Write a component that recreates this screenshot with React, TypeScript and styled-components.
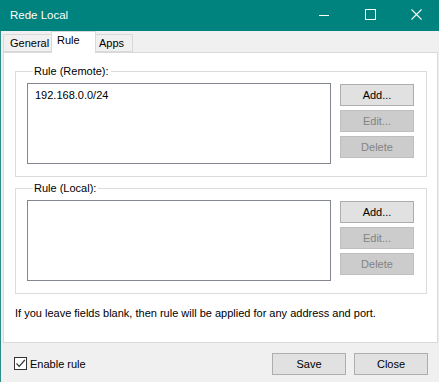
import { FC } from "react";
import styled, { createGlobalStyle } from "styled-components";

const font = `"Segoe UI", "Liberation Sans", Arial, sans-serif`;

const GlobalStyle = createGlobalStyle`
  html, body {
    margin: 0;
    padding: 0;
    background: #f0f0f0;
  }
  * {
    box-sizing: border-box;
  }
`;

type Rule = { title: string; entries: string[] };

const rules: Rule[] = [
  { title: "Rule (Remote):", entries: ["192.168.0.0/24"] },
  { title: "Rule (Local):", entries: [] },
];

const tabs = [
  { label: "General", width: 49, indent: 6 },
  { label: "Rule", width: 45, indent: 5, active: true },
  { label: "Apps", width: 38, indent: 3 },
];

const App: FC = () => (
  <>
    <GlobalStyle />
    <Window>
      <TitleBar>
        <Title>Rede Local</Title>
        <Controls>
          <ControlButton>
            <svg width="10" height="10" viewBox="0 0 10 10">
              <line x1="0" y1="5.5" x2="10" y2="5.5" stroke="#fff" strokeWidth="1" />
            </svg>
          </ControlButton>
          <ControlButton>
            <svg width="11" height="11" viewBox="0 0 11 11">
              <rect x="0.5" y="0.5" width="10" height="10" fill="none" stroke="#fff" strokeWidth="1" />
            </svg>
          </ControlButton>
          <ControlButton>
            <svg width="11" height="11" viewBox="0 0 11 11">
              <path d="M0.5 0.5 L10.5 10.5 M10.5 0.5 L0.5 10.5" stroke="#fff" strokeWidth="1.1" />
            </svg>
          </ControlButton>
        </Controls>
      </TitleBar>

      <TabStrip>
        {tabs.map((tab) => (
          <Tab key={tab.label} active={tab.active} $width={tab.width} $indent={tab.indent}>
            {tab.label}
          </Tab>
        ))}
      </TabStrip>

      <Panel>
        {rules.map((rule) => (
          <Group key={rule.title}>
            <Legend>{rule.title}</Legend>
            <GroupBody>
              <ListBox>
                {rule.entries.map((entry) => (
                  <ListItem key={entry}>{entry}</ListItem>
                ))}
              </ListBox>
              <ButtonColumn>
                <Button>Add...</Button>
                <Button disabled>Edit...</Button>
                <Button disabled>Delete</Button>
              </ButtonColumn>
            </GroupBody>
          </Group>
        ))}
        <Hint>
          If you leave fields blank, then rule will be applied for any address and port.
        </Hint>
      </Panel>

      <Footer>
        <CheckLabel>
          <CheckBox>
            <svg width="11" height="11" viewBox="0 0 11 11">
              <path d="M1.5 5.5 L4.2 8.3 L9.8 2" fill="none" stroke="#333" strokeWidth="1.2" />
            </svg>
          </CheckBox>
          Enable rule
        </CheckLabel>
        <FooterButtons>
          <Button>Save</Button>
          <Button>Close</Button>
        </FooterButtons>
      </Footer>
    </Window>
  </>
);

export default App;

const Window = styled.div`
  width: 439px;
  height: 382px;
  display: flex;
  flex-direction: column;
  background: #f0f0f0;
  border-left: 1px solid #2b8f88;
  font-family: ${font};
  font-size: 11px;
  color: #000;
`;

const TitleBar = styled.div`
  height: 31px;
  flex: none;
  display: flex;
  align-items: center;
  justify-content: space-between;
  background: #00827f;
  margin-left: -1px;
  padding-left: 10px;
`;

const Title = styled.div`
  color: #fff;
  font-size: 11.5px;
  margin-top: -1px;
`;

const Controls = styled.div`
  display: flex;
  height: 100%;
`;

const ControlButton = styled.div`
  width: 46px;
  height: 100%;
  display: flex;
  align-items: center;
  justify-content: center;
  margin-top: -1px;
`;

const TabStrip = styled.div`
  flex: none;
  display: flex;
  align-items: flex-end;
  height: 22px;
  padding-left: 2px;
  margin-bottom: -1px;
  position: relative;
  z-index: 1;
`;

const Tab = styled.div<{ active?: boolean; $width: number; $indent: number }>`
  width: ${(p) => p.$width}px;
  height: ${(p) => (p.active ? "22px" : "18px")};
  margin-bottom: ${(p) => (p.active ? "0" : "1px")};
  padding: ${(p) => (p.active ? `2px 0 0 ${p.$indent}px` : `0 0 0 ${p.$indent}px`)};
  margin-left: ${(p) => (p.active ? "-1px" : "0")};
  margin-right: ${(p) => (p.active ? "-1px" : "0")};
  background: ${(p) => (p.active ? "#fff" : "#f0f0f0")};
  border: 1px solid #d9d9d9;
  border-bottom: ${(p) => (p.active ? "none" : "1px solid #d9d9d9")};
  display: flex;
  align-items: ${(p) => (p.active ? "flex-start" : "center")};
  position: relative;
  z-index: ${(p) => (p.active ? 2 : 1)};
`;

const Panel = styled.div`
  height: 291px;
  flex: none;
  margin: 0 1px 0 2px;
  background: #fff;
  border: 1px solid #d9d9d9;
  padding: 10px 10px 0 11px;
  display: flex;
  flex-direction: column;
`;

const Group = styled.fieldset`
  margin: 0 0 3px 0;
  padding: 0 12px 12px 11px;
  border: 1px solid #dcdcdc;
  min-width: 0;
`;

const Legend = styled.legend`
  padding: 0 2px 0 1px;
  margin-left: 6px;
  line-height: 16px;
  color: #000;
`;

const GroupBody = styled.div`
  display: flex;
  gap: 9px;
  margin-top: 4px;
`;

const ListBox = styled.div`
  width: 304px;
  height: 81px;
  border: 1px solid #828790;
  background: #fff;
  padding: 3px 7px;
`;

const ListItem = styled.div`
  line-height: 16px;
`;

const ButtonColumn = styled.div`
  display: flex;
  flex-direction: column;
  gap: 4px;
  padding-top: 1px;
`;

const Button = styled.button`
  width: 74px;
  height: 22px;
  padding: 0;
  font-family: ${font};
  font-size: 11px;
  color: #000;
  background: #e1e1e1;
  border: 1px solid #adadad;
  border-radius: 0;

  &:disabled {
    color: #838383;
    background: #cccccc;
    border-color: #bfbfbf;
  }
`;

const Hint = styled.div`
  margin-top: 8px;
  line-height: 16px;
`;

const Footer = styled.div`
  flex: 1;
  display: flex;
  align-items: center;
  justify-content: space-between;
  padding: 2px 11px 0 13px;
`;

const CheckLabel = styled.label`
  display: flex;
  align-items: center;
  gap: 3px;
`;

const CheckBox = styled.span`
  width: 13px;
  height: 13px;
  border: 1px solid #333;
  background: #fff;
  display: flex;
  align-items: center;
  justify-content: center;
`;

const FooterButtons = styled.div`
  display: flex;
  gap: 8px;
`;
